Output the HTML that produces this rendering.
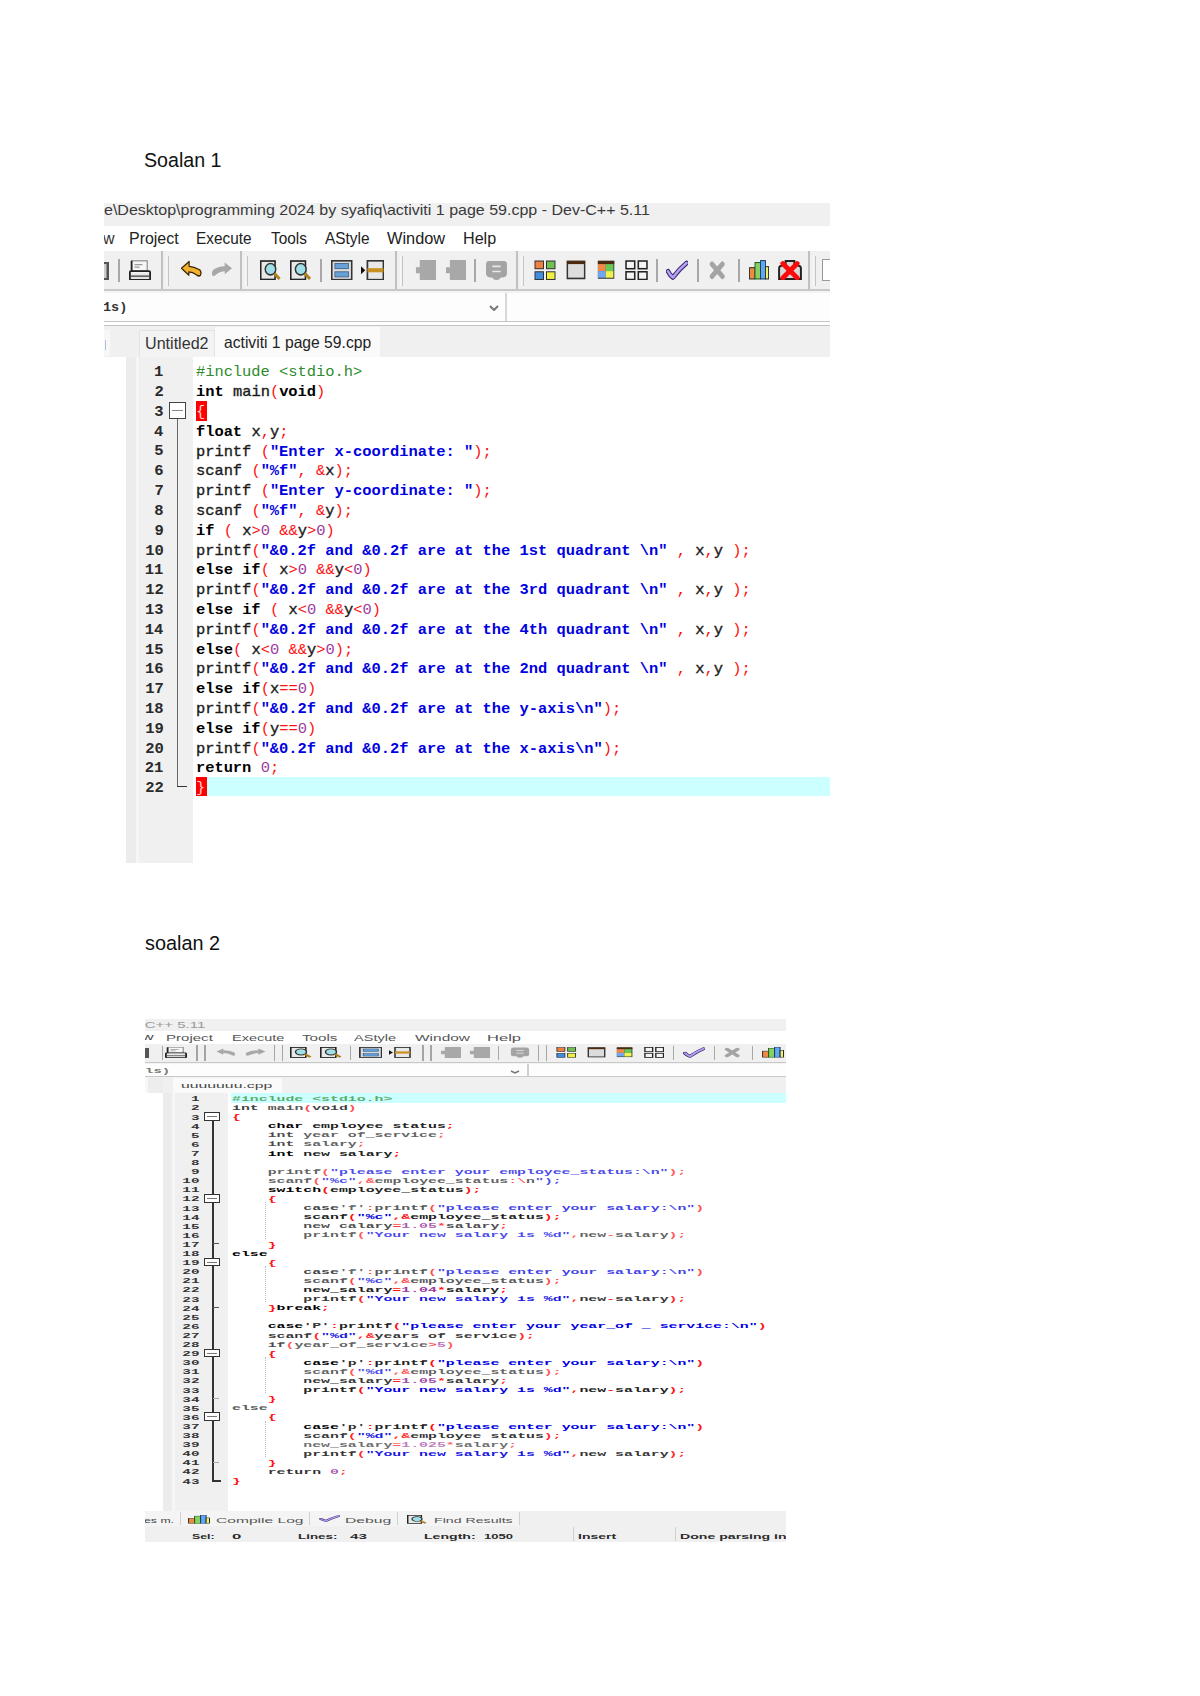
<!DOCTYPE html><html><head><meta charset="utf-8"><style>
html,body{margin:0;padding:0;background:#fff;width:1200px;height:1696px;overflow:hidden;position:relative}
.pp{color:#2e8b2e}
.k{color:#000;font-weight:bold}
.id{color:#1a1a1a}
.s{color:#0000e0;font-weight:bold}
.ch{color:#333}
.c2 .id{color:#222}
.c1 .id{-webkit-text-stroke:0.35px #1a1a1a}
.n{color:#9a3aa0}
.sy{color:#ff1010}
.br{color:#ffd0d0}
</style></head><body>
<div class="h" style="position:absolute;left:144.12px;top:150.17px;font-family:'Liberation Sans',sans-serif;font-size:20.5px;line-height:20.5px;height:20.5px;color:#111;font-weight:normal;white-space:pre;transform:scale(0.9566,1.0);transform-origin:0px 17.43px;">Soalan 1</div>
<div class="h" style="position:absolute;left:145.2px;top:933.38px;font-family:'Liberation Sans',sans-serif;font-size:20.5px;line-height:20.5px;height:20.5px;color:#111;font-weight:normal;white-space:pre;transform:scale(0.9677,1.0);transform-origin:0px 17.43px;">soalan 2</div>
<div style="position:absolute;left:104px;top:203px;width:726px;height:23px;background:#f0f0f0;"></div>
<div style="position:absolute;left:103.78px;top:202.92px;font-family:'Liberation Sans',sans-serif;font-size:14.8px;line-height:14.8px;height:14.8px;color:#3a3a3a;font-weight:normal;white-space:pre;transform:scale(1.0816,1.0);transform-origin:0px 12.58px;">e\Desktop\programming 2024 by syafiq\activiti 1 page 59.cpp - Dev-C++ 5.11</div>
<div style="position:absolute;left:104px;top:226px;width:726px;height:25px;background:#ffffff;"></div>
<div style="position:absolute;left:103px;top:230.70px;font-family:'Liberation Sans',sans-serif;font-size:16px;line-height:16px;height:16px;color:#333;font-weight:normal;white-space:pre;">w</div>
<div style="position:absolute;left:129.22px;top:230.38px;font-family:'Liberation Sans',sans-serif;font-size:16.5px;line-height:16.5px;height:16.5px;color:#222;font-weight:normal;white-space:pre;transform:scale(0.9667,1.0);transform-origin:0px 14.03px;">Project</div>
<div style="position:absolute;left:196.27px;top:230.38px;font-family:'Liberation Sans',sans-serif;font-size:16.5px;line-height:16.5px;height:16.5px;color:#222;font-weight:normal;white-space:pre;transform:scale(0.9304,1.0);transform-origin:0px 14.03px;">Execute</div>
<div style="position:absolute;left:270.69px;top:230.38px;font-family:'Liberation Sans',sans-serif;font-size:16.5px;line-height:16.5px;height:16.5px;color:#222;font-weight:normal;white-space:pre;transform:scale(0.9304,1.0);transform-origin:0px 14.03px;">Tools</div>
<div style="position:absolute;left:324.92px;top:230.38px;font-family:'Liberation Sans',sans-serif;font-size:16.5px;line-height:16.5px;height:16.5px;color:#222;font-weight:normal;white-space:pre;transform:scale(0.9336,1.0);transform-origin:0px 14.03px;">AStyle</div>
<div style="position:absolute;left:386.82px;top:230.38px;font-family:'Liberation Sans',sans-serif;font-size:16.5px;line-height:16.5px;height:16.5px;color:#222;font-weight:normal;white-space:pre;transform:scale(0.9905,1.0);transform-origin:0px 14.03px;">Window</div>
<div style="position:absolute;left:463.11px;top:230.38px;font-family:'Liberation Sans',sans-serif;font-size:16.5px;line-height:16.5px;height:16.5px;color:#222;font-weight:normal;white-space:pre;transform:scale(0.9772,1.0);transform-origin:0px 14.03px;">Help</div>
<div style="position:absolute;left:104px;top:251px;width:726px;height:38px;background:#f0f0f0;"></div>
<div style="position:absolute;left:104px;top:289px;width:726px;height:1.5px;background:#c8c8c8;"></div>
<div style="position:absolute;left:118px;top:258.5px;width:1.5px;height:23.5px;background:#a8a8a8;"></div>
<div style="position:absolute;left:320px;top:258.5px;width:1.5px;height:23.5px;background:#a8a8a8;"></div>
<div style="position:absolute;left:474px;top:258.5px;width:1.5px;height:23.5px;background:#a8a8a8;"></div>
<div style="position:absolute;left:656px;top:258.5px;width:1.5px;height:23.5px;background:#a8a8a8;"></div>
<div style="position:absolute;left:697px;top:258.5px;width:1.5px;height:23.5px;background:#a8a8a8;"></div>
<div style="position:absolute;left:738px;top:258.5px;width:1.5px;height:23.5px;background:#a8a8a8;"></div>
<div style="position:absolute;left:161px;top:251px;width:1.5px;height:38px;background:#c0c0c0;"></div>
<div style="position:absolute;left:167.5px;top:256px;width:1.1999999999999886px;height:30px;background:#c4c4c4;"></div>
<div style="position:absolute;left:166.3px;top:256px;width:1.1999999999999886px;height:30px;background:#f8f8f8;"></div>
<div style="position:absolute;left:240px;top:251px;width:1.5px;height:38px;background:#c0c0c0;"></div>
<div style="position:absolute;left:246.5px;top:256px;width:1.1999999999999886px;height:30px;background:#c4c4c4;"></div>
<div style="position:absolute;left:245.3px;top:256px;width:1.1999999999999886px;height:30px;background:#f8f8f8;"></div>
<div style="position:absolute;left:395px;top:251px;width:1.5px;height:38px;background:#c0c0c0;"></div>
<div style="position:absolute;left:401.5px;top:256px;width:1.1999999999999886px;height:30px;background:#c4c4c4;"></div>
<div style="position:absolute;left:400.3px;top:256px;width:1.1999999999999886px;height:30px;background:#f8f8f8;"></div>
<div style="position:absolute;left:516px;top:251px;width:1.5px;height:38px;background:#c0c0c0;"></div>
<div style="position:absolute;left:522.5px;top:256px;width:1.2000000000000455px;height:30px;background:#c4c4c4;"></div>
<div style="position:absolute;left:521.3px;top:256px;width:1.2000000000000455px;height:30px;background:#f8f8f8;"></div>
<div style="position:absolute;left:808px;top:251px;width:1.5px;height:38px;background:#c0c0c0;"></div>
<div style="position:absolute;left:814.5px;top:256px;width:1.2000000000000455px;height:30px;background:#c4c4c4;"></div>
<div style="position:absolute;left:813.3px;top:256px;width:1.2000000000000455px;height:30px;background:#f8f8f8;"></div>
<svg style="position:absolute;left:104px;top:262px" width="5" height="18" viewBox="0 0 5 18" preserveAspectRatio="none"><rect x="0" y="0" width="5" height="18" fill="#555"/><rect x="0" y="2" width="2.5" height="14" fill="#ccc"/></svg>
<svg style="position:absolute;left:129px;top:259.5px" width="22" height="20.5" viewBox="0 0 22 20" preserveAspectRatio="none"><rect x="2.6" y="0.8" width="15.6" height="10" fill="#f6f6f6" stroke="#888" stroke-width="1.1"/><path d="M2.6 0.8 V10.8" stroke="#222" stroke-width="1.8"/><path d="M5.5 4.5h8M5.5 7h5" stroke="#999" stroke-width="1.3"/><rect x="0.9" y="10.8" width="20.2" height="8.6" rx="1" fill="#e4e4e4" stroke="#222" stroke-width="1.8"/><path d="M2 15.8h18" stroke="#666" stroke-width="1.6"/><path d="M2 12.6h18" stroke="#fafafa" stroke-width="1.2"/></svg>
<svg style="position:absolute;left:180.5px;top:259.5px" width="21" height="20.5" viewBox="0 0 22 20" preserveAspectRatio="none"><path d="M0.5 8 L8.5 1.5 L8.5 6.2 Q13.5 6.5 19.5 9.5 Q22 12 20.2 15 Q18.5 16.3 16.5 14.6 Q12 11.6 8.2 11.6 L8.2 14.8 Z" fill="#f2b030" stroke="#3a2400" stroke-width="1.3" stroke-linejoin="round"/></svg>
<svg style="position:absolute;left:211px;top:259.5px" width="21.5" height="20.5" viewBox="0 0 22 20" preserveAspectRatio="none"><path d="M21.5 8 L14 2.5 L14 6 Q7 6 1.8 10 Q0 13 1.6 15.5 Q3.2 16.2 5 14.5 Q9 11 14 11 L14 14 Z" fill="#a8a8a8"/></svg>
<svg style="position:absolute;left:260px;top:259.5px" width="21" height="20.5" viewBox="0 0 22 20" preserveAspectRatio="none"><rect x="0.8" y="1" width="15" height="18" fill="#e8e8e8" stroke="#222" stroke-width="1.6"/><circle cx="11" cy="9" r="5.5" fill="#9fe0e8" stroke="#333" stroke-width="1.5"/><path d="M15 13 L20.5 18.5" stroke="#b08020" stroke-width="3"/></svg>
<svg style="position:absolute;left:289.5px;top:259.5px" width="21.5" height="20.5" viewBox="0 0 22 20" preserveAspectRatio="none"><rect x="0.8" y="1" width="15" height="18" fill="#e8e8e8" stroke="#222" stroke-width="1.6"/><circle cx="11" cy="9" r="5.5" fill="#9fe0e8" stroke="#333" stroke-width="1.5"/><path d="M15 13 L20.5 18.5" stroke="#b08020" stroke-width="3"/></svg>
<svg style="position:absolute;left:331px;top:259.5px" width="21.5" height="20.5" viewBox="0 0 22 20" preserveAspectRatio="none"><rect x="0.8" y="0.8" width="20.4" height="18.4" fill="#ddd" stroke="#333" stroke-width="1.6"/><rect x="4" y="3.5" width="14" height="5" fill="#6aa0d8" stroke="#3a5a80" stroke-width="0.8"/><rect x="4" y="11.5" width="14" height="5" fill="#6aa0d8" stroke="#3a5a80" stroke-width="0.8"/></svg>
<svg style="position:absolute;left:360.5px;top:259.5px" width="23.5" height="20.5" viewBox="0 0 22 20" preserveAspectRatio="none"><path d="M0 6 L4 10 L0 14 Z" fill="#111"/><rect x="6" y="0.8" width="15" height="18.4" fill="#e8e8e8" stroke="#333" stroke-width="1.6"/><rect x="6" y="8" width="15" height="4" fill="#c89020"/></svg>
<svg style="position:absolute;left:415px;top:259.5px" width="21" height="20.5" viewBox="0 0 22 20" preserveAspectRatio="none"><path d="M5 0 H22 V20 H5 V13 H1 V7 H5 Z" fill="#a8a8a8"/></svg>
<svg style="position:absolute;left:444.5px;top:259.5px" width="21.5" height="20.5" viewBox="0 0 22 20" preserveAspectRatio="none"><path d="M5 0 H22 V20 H5 V13 H1 V7 H5 Z" fill="#a8a8a8"/></svg>
<svg style="position:absolute;left:485px;top:259.5px" width="23" height="20.5" viewBox="0 0 22 20" preserveAspectRatio="none"><path d="M1 4 Q1 1 4 1 H18 Q21 1 21 4 V13 Q21 17 17 17 H15 Q14 19.5 11 19.5 Q8 19.5 7 17 H5 Q1 17 1 13 Z" fill="#a4a4a4"/><path d="M7 6.2h8M7 11.2h8" stroke="#e8e8e8" stroke-width="1.6"/></svg>
<svg style="position:absolute;left:534px;top:259.5px" width="22" height="20.5" viewBox="0 0 22 20" preserveAspectRatio="none"><rect x="1" y="1" width="8.5" height="7.5" fill="#f08040" stroke="#333" stroke-width="1"/><rect x="12.5" y="1" width="8.5" height="7.5" fill="#70c050" stroke="#333" stroke-width="1"/><rect x="1" y="11.5" width="8.5" height="7.5" fill="#4090e0" stroke="#333" stroke-width="1"/><rect x="12.5" y="11.5" width="8.5" height="7.5" fill="#f0f040" stroke="#333" stroke-width="1"/></svg>
<svg style="position:absolute;left:566px;top:259.5px" width="20" height="20.5" viewBox="0 0 22 20" preserveAspectRatio="none"><rect x="1.5" y="1.5" width="19" height="16.5" fill="#dcdcdc" stroke="#333" stroke-width="1.6"/><rect x="1" y="0.8" width="20" height="3.2" fill="#4a2a10"/></svg>
<svg style="position:absolute;left:596.5px;top:259.5px" width="19" height="20.5" viewBox="0 0 22 20" preserveAspectRatio="none"><rect x="1" y="0.8" width="19" height="17.5" fill="#333"/><rect x="1" y="0.8" width="19" height="3" fill="#4a2a10"/><rect x="1.2" y="4" width="9" height="6.8" fill="#f08a48"/><rect x="10.2" y="4" width="8.8" height="6.8" fill="#68c858"/><rect x="1.2" y="10.8" width="9" height="6.5" fill="#70a8f0"/><rect x="10.2" y="10.8" width="8.8" height="6.5" fill="#f0f050"/></svg>
<svg style="position:absolute;left:625px;top:259.5px" width="22.5" height="20.5" viewBox="0 0 22 20" preserveAspectRatio="none"><rect x="1" y="1" width="8.5" height="7.5" fill="#f4f4f4" stroke="#222" stroke-width="1.5"/><rect x="13" y="1" width="8.5" height="7.5" fill="#f4f4f4" stroke="#222" stroke-width="1.5"/><rect x="1" y="11.5" width="8.5" height="7.5" fill="#f4f4f4" stroke="#222" stroke-width="1.5"/><rect x="13" y="11.5" width="8.5" height="7.5" fill="#f4f4f4" stroke="#222" stroke-width="1.5"/></svg>
<svg style="position:absolute;left:666px;top:259.5px" width="22" height="20.5" viewBox="0 0 22 20" preserveAspectRatio="none"><path d="M2 11 Q4 15 7 17 Q13 9 20.5 3" fill="none" stroke="#3a2a70" stroke-width="4.6" stroke-linecap="round" stroke-linejoin="round"/><path d="M2 11 Q4 15 7 17 Q13 9 20.5 3" fill="none" stroke="#b8a0f4" stroke-width="2.6" stroke-linecap="round" stroke-linejoin="round"/></svg>
<svg style="position:absolute;left:709px;top:259.5px" width="19" height="20.5" viewBox="0 0 22 20" preserveAspectRatio="none"><path d="M3.5 4 L15.5 16 M15.5 4 L3.5 16" stroke="#a4a4a4" stroke-width="5.2" stroke-linecap="round"/></svg>
<svg style="position:absolute;left:749px;top:259.5px" width="20" height="20.5" viewBox="0 0 22 20" preserveAspectRatio="none"><rect x="0.6" y="7.5" width="6" height="11" fill="#f08a40" stroke="#2a2a2a" stroke-width="1"/><rect x="6.6" y="2.5" width="6" height="16" fill="#8ad060" stroke="#1a5a1a" stroke-width="1"/><rect x="12.6" y="0.6" width="5.5" height="17.9" fill="#60a8f0" stroke="#1a3a6a" stroke-width="1"/><rect x="18.1" y="6.5" width="3.4" height="12" fill="#f0f070" stroke="#2a2a2a" stroke-width="1"/></svg>
<svg style="position:absolute;left:778px;top:259.5px" width="24" height="20.5" viewBox="0 0 22 20" preserveAspectRatio="none"><path d="M1 18.5 V8 Q1 5.5 4 5.5 H7 V1 H15 V5.5 H18 Q21 5.5 21 8 V18.5 Z" fill="#d8d8d8" stroke="#222" stroke-width="1.8"/><path d="M4.5 3.5 L17.5 17.5 M17.5 3.5 L4.5 17.5" stroke="#ff0a0a" stroke-width="4.6" stroke-linecap="round"/></svg>
<svg style="position:absolute;left:822px;top:259px" width="8" height="22" viewBox="0 0 8 22" preserveAspectRatio="none"><rect x="0.5" y="0.5" width="12" height="21" fill="#fff" stroke="#999"/></svg>
<div style="position:absolute;left:104px;top:290.5px;width:726px;height:30.5px;background:#f3f3f3;"></div>
<div style="position:absolute;left:104px;top:293px;width:401px;height:27.5px;background:#fdfdfd;"></div>
<div style="position:absolute;left:507px;top:293px;width:323px;height:27.5px;background:#fdfdfd;"></div>
<div style="position:absolute;left:505px;top:293px;width:1.5px;height:27.5px;background:#d8d8d8;"></div>
<div style="position:absolute;left:104px;top:320.5px;width:726px;height:1.5px;background:#c4c4c4;"></div>
<div style="position:absolute;left:104px;top:324.5px;width:726px;height:1.5px;background:#c4c4c4;"></div>
<div style="position:absolute;left:103px;top:301.24px;font-family:'Liberation Mono',monospace;font-size:13.5px;line-height:13.5px;height:13.5px;color:#333;font-weight:bold;white-space:pre;">1s)</div>
<svg style="position:absolute;left:489px;top:304.5px" width="10" height="6" viewBox="0 0 10 6" preserveAspectRatio="none"><path d="M1 1 L5 5 L9 1" fill="none" stroke="#777" stroke-width="2"/></svg>
<div style="position:absolute;left:104px;top:326px;width:726px;height:31px;background:#f0f0f0;"></div>
<div style="position:absolute;left:104px;top:330px;width:6px;height:26px;background:#f7f7f7;"></div>
<div style="position:absolute;left:104.5px;top:340px;width:1.0px;height:10px;background:#a8c0e8;"></div>
<div style="position:absolute;left:138.5px;top:330px;width:76.0px;height:27px;background:#f3f3f3;box-sizing:border-box;border:1px solid #e4e4e4;border-bottom:none"></div>
<div style="position:absolute;left:215px;top:327px;width:165px;height:30px;background:#fafafa;"></div>
<div style="position:absolute;left:145.29px;top:334.78px;font-family:'Liberation Sans',sans-serif;font-size:16.5px;line-height:16.5px;height:16.5px;color:#333;font-weight:normal;white-space:pre;transform:scale(0.9757,1.0);transform-origin:0px 14.03px;">Untitled2</div>
<div style="position:absolute;left:223.9px;top:333.78px;font-family:'Liberation Sans',sans-serif;font-size:16.5px;line-height:16.5px;height:16.5px;color:#222;font-weight:normal;white-space:pre;transform:scale(0.9491,1.0);transform-origin:0px 14.03px;">activiti 1 page 59.cpp</div>
<div style="position:absolute;left:104px;top:357px;width:726px;height:506px;background:#ffffff;"></div>
<div style="position:absolute;left:126px;top:357px;width:10px;height:506px;background:#ececec;"></div>
<div style="position:absolute;left:136px;top:357px;width:3px;height:506px;background:#f6f6f6;"></div>
<div style="position:absolute;left:139px;top:357px;width:54px;height:506px;background:#f0f0f0;"></div>
<div style="position:absolute;left:196px;top:776.8px;width:634px;height:19.200000000000045px;background:#ccffff;"></div>
<div style="position:absolute;left:195.5px;top:401px;width:11.5px;height:19.5px;background:#ff0000;"></div>
<div style="position:absolute;left:195.5px;top:777px;width:11.5px;height:19px;background:#ff0000;"></div>
<div style="position:absolute;left:177px;top:418.5px;width:1.3000000000000114px;height:368.0px;background:#666;"></div>
<div style="position:absolute;left:177px;top:785.5px;width:9.5px;height:1.5px;background:#333;"></div>
<div style="position:absolute;left:169px;top:402px;width:16.5px;height:16.5px;box-sizing:border-box;border:1.5px solid #444;background:#fff"></div>
<div style="position:absolute;left:172px;top:409.5px;width:11px;height:1.5px;background:#888;"></div>
<div style="position:absolute;left:154.12px;top:365.22px;font-family:'Liberation Mono',monospace;font-size:15.5px;line-height:15.5px;height:15.5px;color:#2a2a2a;font-weight:bold;white-space:pre;">1</div>
<div style="position:absolute;left:154.43px;top:385.03px;font-family:'Liberation Mono',monospace;font-size:15.5px;line-height:15.5px;height:15.5px;color:#2a2a2a;font-weight:bold;white-space:pre;">2</div>
<div style="position:absolute;left:154.28px;top:404.84px;font-family:'Liberation Mono',monospace;font-size:15.5px;line-height:15.5px;height:15.5px;color:#2a2a2a;font-weight:bold;white-space:pre;">3</div>
<div style="position:absolute;left:153.96px;top:424.65px;font-family:'Liberation Mono',monospace;font-size:15.5px;line-height:15.5px;height:15.5px;color:#2a2a2a;font-weight:bold;white-space:pre;">4</div>
<div style="position:absolute;left:154.28px;top:444.46px;font-family:'Liberation Mono',monospace;font-size:15.5px;line-height:15.5px;height:15.5px;color:#2a2a2a;font-weight:bold;white-space:pre;">5</div>
<div style="position:absolute;left:154.35px;top:464.27px;font-family:'Liberation Mono',monospace;font-size:15.5px;line-height:15.5px;height:15.5px;color:#2a2a2a;font-weight:bold;white-space:pre;">6</div>
<div style="position:absolute;left:154.51px;top:484.08px;font-family:'Liberation Mono',monospace;font-size:15.5px;line-height:15.5px;height:15.5px;color:#2a2a2a;font-weight:bold;white-space:pre;">7</div>
<div style="position:absolute;left:154.35px;top:503.89px;font-family:'Liberation Mono',monospace;font-size:15.5px;line-height:15.5px;height:15.5px;color:#2a2a2a;font-weight:bold;white-space:pre;">8</div>
<div style="position:absolute;left:154.43px;top:523.70px;font-family:'Liberation Mono',monospace;font-size:15.5px;line-height:15.5px;height:15.5px;color:#2a2a2a;font-weight:bold;white-space:pre;">9</div>
<div style="position:absolute;left:145.13px;top:543.51px;font-family:'Liberation Mono',monospace;font-size:15.5px;line-height:15.5px;height:15.5px;color:#2a2a2a;font-weight:bold;white-space:pre;">10</div>
<div style="position:absolute;left:144.82px;top:563.32px;font-family:'Liberation Mono',monospace;font-size:15.5px;line-height:15.5px;height:15.5px;color:#2a2a2a;font-weight:bold;white-space:pre;">11</div>
<div style="position:absolute;left:145.13px;top:583.13px;font-family:'Liberation Mono',monospace;font-size:15.5px;line-height:15.5px;height:15.5px;color:#2a2a2a;font-weight:bold;white-space:pre;">12</div>
<div style="position:absolute;left:144.98px;top:602.94px;font-family:'Liberation Mono',monospace;font-size:15.5px;line-height:15.5px;height:15.5px;color:#2a2a2a;font-weight:bold;white-space:pre;">13</div>
<div style="position:absolute;left:144.67px;top:622.75px;font-family:'Liberation Mono',monospace;font-size:15.5px;line-height:15.5px;height:15.5px;color:#2a2a2a;font-weight:bold;white-space:pre;">14</div>
<div style="position:absolute;left:144.98px;top:642.56px;font-family:'Liberation Mono',monospace;font-size:15.5px;line-height:15.5px;height:15.5px;color:#2a2a2a;font-weight:bold;white-space:pre;">15</div>
<div style="position:absolute;left:145.05px;top:662.37px;font-family:'Liberation Mono',monospace;font-size:15.5px;line-height:15.5px;height:15.5px;color:#2a2a2a;font-weight:bold;white-space:pre;">16</div>
<div style="position:absolute;left:145.21px;top:682.18px;font-family:'Liberation Mono',monospace;font-size:15.5px;line-height:15.5px;height:15.5px;color:#2a2a2a;font-weight:bold;white-space:pre;">17</div>
<div style="position:absolute;left:145.05px;top:701.99px;font-family:'Liberation Mono',monospace;font-size:15.5px;line-height:15.5px;height:15.5px;color:#2a2a2a;font-weight:bold;white-space:pre;">18</div>
<div style="position:absolute;left:145.13px;top:721.80px;font-family:'Liberation Mono',monospace;font-size:15.5px;line-height:15.5px;height:15.5px;color:#2a2a2a;font-weight:bold;white-space:pre;">19</div>
<div style="position:absolute;left:145.13px;top:741.61px;font-family:'Liberation Mono',monospace;font-size:15.5px;line-height:15.5px;height:15.5px;color:#2a2a2a;font-weight:bold;white-space:pre;">20</div>
<div style="position:absolute;left:144.82px;top:761.42px;font-family:'Liberation Mono',monospace;font-size:15.5px;line-height:15.5px;height:15.5px;color:#2a2a2a;font-weight:bold;white-space:pre;">21</div>
<div style="position:absolute;left:145.13px;top:781.23px;font-family:'Liberation Mono',monospace;font-size:15.5px;line-height:15.5px;height:15.5px;color:#2a2a2a;font-weight:bold;white-space:pre;">22</div>
<div class="c1" style="position:absolute;left:195.9px;top:365.28px;font-family:'Liberation Mono',monospace;font-size:15.42px;line-height:15.42px;height:15.42px;color:#000;font-weight:normal;white-space:pre;"><span class="pp">#include &lt;stdio.h&gt;</span></div>
<div class="c1" style="position:absolute;left:195.9px;top:385.09px;font-family:'Liberation Mono',monospace;font-size:15.42px;line-height:15.42px;height:15.42px;color:#000;font-weight:normal;white-space:pre;"><span class="k">int</span> <span class="id">main</span><span class="sy">(</span><span class="k">void</span><span class="sy">)</span></div>
<div class="c1" style="position:absolute;left:195.9px;top:404.90px;font-family:'Liberation Mono',monospace;font-size:15.42px;line-height:15.42px;height:15.42px;color:#000;font-weight:normal;white-space:pre;"><span class="br">{</span></div>
<div class="c1" style="position:absolute;left:195.9px;top:424.71px;font-family:'Liberation Mono',monospace;font-size:15.42px;line-height:15.42px;height:15.42px;color:#000;font-weight:normal;white-space:pre;"><span class="k">float</span> <span class="id">x</span><span class="sy">,</span><span class="id">y</span><span class="sy">;</span></div>
<div class="c1" style="position:absolute;left:195.9px;top:444.52px;font-family:'Liberation Mono',monospace;font-size:15.42px;line-height:15.42px;height:15.42px;color:#000;font-weight:normal;white-space:pre;"><span class="id">printf</span> <span class="sy">(</span><span class="s">&quot;Enter x-coordinate: &quot;</span><span class="sy">)</span><span class="sy">;</span></div>
<div class="c1" style="position:absolute;left:195.9px;top:464.33px;font-family:'Liberation Mono',monospace;font-size:15.42px;line-height:15.42px;height:15.42px;color:#000;font-weight:normal;white-space:pre;"><span class="id">scanf</span> <span class="sy">(</span><span class="s">&quot;%f&quot;</span><span class="sy">,</span> <span class="sy">&amp;</span><span class="id">x</span><span class="sy">)</span><span class="sy">;</span></div>
<div class="c1" style="position:absolute;left:195.9px;top:484.14px;font-family:'Liberation Mono',monospace;font-size:15.42px;line-height:15.42px;height:15.42px;color:#000;font-weight:normal;white-space:pre;"><span class="id">printf</span> <span class="sy">(</span><span class="s">&quot;Enter y-coordinate: &quot;</span><span class="sy">)</span><span class="sy">;</span></div>
<div class="c1" style="position:absolute;left:195.9px;top:503.95px;font-family:'Liberation Mono',monospace;font-size:15.42px;line-height:15.42px;height:15.42px;color:#000;font-weight:normal;white-space:pre;"><span class="id">scanf</span> <span class="sy">(</span><span class="s">&quot;%f&quot;</span><span class="sy">,</span> <span class="sy">&amp;</span><span class="id">y</span><span class="sy">)</span><span class="sy">;</span></div>
<div class="c1" style="position:absolute;left:195.9px;top:523.76px;font-family:'Liberation Mono',monospace;font-size:15.42px;line-height:15.42px;height:15.42px;color:#000;font-weight:normal;white-space:pre;"><span class="k">if</span> <span class="sy">(</span> <span class="id">x</span><span class="sy">&gt;</span><span class="n">0</span> <span class="sy">&amp;</span><span class="sy">&amp;</span><span class="id">y</span><span class="sy">&gt;</span><span class="n">0</span><span class="sy">)</span></div>
<div class="c1" style="position:absolute;left:195.9px;top:543.57px;font-family:'Liberation Mono',monospace;font-size:15.42px;line-height:15.42px;height:15.42px;color:#000;font-weight:normal;white-space:pre;"><span class="id">printf</span><span class="sy">(</span><span class="s">&quot;&amp;0.2f and &amp;0.2f are at the 1st quadrant \n&quot;</span> <span class="sy">,</span> <span class="id">x</span><span class="sy">,</span><span class="id">y</span> <span class="sy">)</span><span class="sy">;</span></div>
<div class="c1" style="position:absolute;left:195.9px;top:563.38px;font-family:'Liberation Mono',monospace;font-size:15.42px;line-height:15.42px;height:15.42px;color:#000;font-weight:normal;white-space:pre;"><span class="k">else</span> <span class="k">if</span><span class="sy">(</span> <span class="id">x</span><span class="sy">&gt;</span><span class="n">0</span> <span class="sy">&amp;</span><span class="sy">&amp;</span><span class="id">y</span><span class="sy">&lt;</span><span class="n">0</span><span class="sy">)</span></div>
<div class="c1" style="position:absolute;left:195.9px;top:583.19px;font-family:'Liberation Mono',monospace;font-size:15.42px;line-height:15.42px;height:15.42px;color:#000;font-weight:normal;white-space:pre;"><span class="id">printf</span><span class="sy">(</span><span class="s">&quot;&amp;0.2f and &amp;0.2f are at the 3rd quadrant \n&quot;</span> <span class="sy">,</span> <span class="id">x</span><span class="sy">,</span><span class="id">y</span> <span class="sy">)</span><span class="sy">;</span></div>
<div class="c1" style="position:absolute;left:195.9px;top:603.00px;font-family:'Liberation Mono',monospace;font-size:15.42px;line-height:15.42px;height:15.42px;color:#000;font-weight:normal;white-space:pre;"><span class="k">else</span> <span class="k">if</span> <span class="sy">(</span> <span class="id">x</span><span class="sy">&lt;</span><span class="n">0</span> <span class="sy">&amp;</span><span class="sy">&amp;</span><span class="id">y</span><span class="sy">&lt;</span><span class="n">0</span><span class="sy">)</span></div>
<div class="c1" style="position:absolute;left:195.9px;top:622.81px;font-family:'Liberation Mono',monospace;font-size:15.42px;line-height:15.42px;height:15.42px;color:#000;font-weight:normal;white-space:pre;"><span class="id">printf</span><span class="sy">(</span><span class="s">&quot;&amp;0.2f and &amp;0.2f are at the 4th quadrant \n&quot;</span> <span class="sy">,</span> <span class="id">x</span><span class="sy">,</span><span class="id">y</span> <span class="sy">)</span><span class="sy">;</span></div>
<div class="c1" style="position:absolute;left:195.9px;top:642.62px;font-family:'Liberation Mono',monospace;font-size:15.42px;line-height:15.42px;height:15.42px;color:#000;font-weight:normal;white-space:pre;"><span class="k">else</span><span class="sy">(</span> <span class="id">x</span><span class="sy">&lt;</span><span class="n">0</span> <span class="sy">&amp;</span><span class="sy">&amp;</span><span class="id">y</span><span class="sy">&gt;</span><span class="n">0</span><span class="sy">)</span><span class="sy">;</span></div>
<div class="c1" style="position:absolute;left:195.9px;top:662.43px;font-family:'Liberation Mono',monospace;font-size:15.42px;line-height:15.42px;height:15.42px;color:#000;font-weight:normal;white-space:pre;"><span class="id">printf</span><span class="sy">(</span><span class="s">&quot;&amp;0.2f and &amp;0.2f are at the 2nd quadrant \n&quot;</span> <span class="sy">,</span> <span class="id">x</span><span class="sy">,</span><span class="id">y</span> <span class="sy">)</span><span class="sy">;</span></div>
<div class="c1" style="position:absolute;left:195.9px;top:682.24px;font-family:'Liberation Mono',monospace;font-size:15.42px;line-height:15.42px;height:15.42px;color:#000;font-weight:normal;white-space:pre;"><span class="k">else</span> <span class="k">if</span><span class="sy">(</span><span class="id">x</span><span class="sy">=</span><span class="sy">=</span><span class="n">0</span><span class="sy">)</span></div>
<div class="c1" style="position:absolute;left:195.9px;top:702.05px;font-family:'Liberation Mono',monospace;font-size:15.42px;line-height:15.42px;height:15.42px;color:#000;font-weight:normal;white-space:pre;"><span class="id">printf</span><span class="sy">(</span><span class="s">&quot;&amp;0.2f and &amp;0.2f are at the y-axis\n&quot;</span><span class="sy">)</span><span class="sy">;</span></div>
<div class="c1" style="position:absolute;left:195.9px;top:721.86px;font-family:'Liberation Mono',monospace;font-size:15.42px;line-height:15.42px;height:15.42px;color:#000;font-weight:normal;white-space:pre;"><span class="k">else</span> <span class="k">if</span><span class="sy">(</span><span class="id">y</span><span class="sy">=</span><span class="sy">=</span><span class="n">0</span><span class="sy">)</span></div>
<div class="c1" style="position:absolute;left:195.9px;top:741.67px;font-family:'Liberation Mono',monospace;font-size:15.42px;line-height:15.42px;height:15.42px;color:#000;font-weight:normal;white-space:pre;"><span class="id">printf</span><span class="sy">(</span><span class="s">&quot;&amp;0.2f and &amp;0.2f are at the x-axis\n&quot;</span><span class="sy">)</span><span class="sy">;</span></div>
<div class="c1" style="position:absolute;left:195.9px;top:761.48px;font-family:'Liberation Mono',monospace;font-size:15.42px;line-height:15.42px;height:15.42px;color:#000;font-weight:normal;white-space:pre;"><span class="k">return</span> <span class="n">0</span><span class="sy">;</span></div>
<div class="c1" style="position:absolute;left:195.9px;top:781.29px;font-family:'Liberation Mono',monospace;font-size:15.42px;line-height:15.42px;height:15.42px;color:#000;font-weight:normal;white-space:pre;"><span class="br">}</span></div>
<div style="position:absolute;left:145px;top:1018.5px;width:641px;height:12.5px;background:#f0f0f0;"></div>
<div style="position:absolute;left:144.75px;top:1015.25px;font-family:'Liberation Sans',sans-serif;font-size:15px;line-height:15px;height:15px;color:#999;font-weight:normal;white-space:pre;transform:scale(1.0,0.56);transform-origin:0px 12.75px;">C++ 5.11</div>
<div style="position:absolute;left:145px;top:1031px;width:641px;height:12.5px;background:#ffffff;"></div>
<div style="position:absolute;left:142px;top:1026.90px;font-family:'Liberation Sans',sans-serif;font-size:16px;line-height:16px;height:16px;color:#444;font-weight:normal;white-space:pre;transform:scale(1.0,0.56);transform-origin:0px 13.60px;">w</div>
<div style="position:absolute;left:166.3px;top:1026.57px;font-family:'Liberation Sans',sans-serif;font-size:16.5px;line-height:16.5px;height:16.5px;color:#555;font-weight:normal;white-space:pre;transform:scale(0.9116,0.56);transform-origin:0px 14.03px;">Project</div>
<div style="position:absolute;left:232.34px;top:1026.57px;font-family:'Liberation Sans',sans-serif;font-size:16.5px;line-height:16.5px;height:16.5px;color:#555;font-weight:normal;white-space:pre;transform:scale(0.8782,0.56);transform-origin:0px 14.03px;">Execute</div>
<div style="position:absolute;left:301.7px;top:1026.57px;font-family:'Liberation Sans',sans-serif;font-size:16.5px;line-height:16.5px;height:16.5px;color:#555;font-weight:normal;white-space:pre;transform:scale(0.9197,0.56);transform-origin:0px 14.03px;">Tools</div>
<div style="position:absolute;left:354.43px;top:1026.57px;font-family:'Liberation Sans',sans-serif;font-size:16.5px;line-height:16.5px;height:16.5px;color:#555;font-weight:normal;white-space:pre;transform:scale(0.8813,0.56);transform-origin:0px 14.03px;">AStyle</div>
<div style="position:absolute;left:414.92px;top:1026.57px;font-family:'Liberation Sans',sans-serif;font-size:16.5px;line-height:16.5px;height:16.5px;color:#555;font-weight:normal;white-space:pre;transform:scale(0.9376,0.56);transform-origin:0px 14.03px;">Window</div>
<div style="position:absolute;left:486.68px;top:1026.57px;font-family:'Liberation Sans',sans-serif;font-size:16.5px;line-height:16.5px;height:16.5px;color:#555;font-weight:normal;white-space:pre;transform:scale(1.0023,0.56);transform-origin:0px 14.03px;">Help</div>
<div style="position:absolute;left:145px;top:1043.5px;width:641px;height:18.5px;background:#f0f0f0;"></div>
<div style="position:absolute;left:145px;top:1062px;width:641px;height:1px;background:#c8c8c8;"></div>
<div style="position:absolute;left:162px;top:1046px;width:1.1999999999999886px;height:14px;background:#a8a8a8;"></div>
<div style="position:absolute;left:350px;top:1046px;width:1.1999999999999886px;height:14px;background:#a8a8a8;"></div>
<div style="position:absolute;left:498px;top:1046px;width:1.1999999999999886px;height:14px;background:#a8a8a8;"></div>
<div style="position:absolute;left:673px;top:1046px;width:1.2000000000000455px;height:14px;background:#a8a8a8;"></div>
<div style="position:absolute;left:714px;top:1046px;width:1.2000000000000455px;height:14px;background:#a8a8a8;"></div>
<div style="position:absolute;left:751.5px;top:1046px;width:1.2000000000000455px;height:14px;background:#a8a8a8;"></div>
<div style="position:absolute;left:196.0px;top:1045px;width:1.5px;height:16px;background:#a4a4a4;"></div>
<div style="position:absolute;left:204.0px;top:1045px;width:1.5px;height:16px;background:#a4a4a4;"></div>
<div style="position:absolute;left:273.5px;top:1045px;width:1.5px;height:16px;background:#a4a4a4;"></div>
<div style="position:absolute;left:281.5px;top:1045px;width:1.5px;height:16px;background:#a4a4a4;"></div>
<div style="position:absolute;left:422.0px;top:1045px;width:1.5px;height:16px;background:#a4a4a4;"></div>
<div style="position:absolute;left:430.0px;top:1045px;width:1.5px;height:16px;background:#a4a4a4;"></div>
<div style="position:absolute;left:537.5px;top:1045px;width:1.5px;height:16px;background:#a4a4a4;"></div>
<div style="position:absolute;left:545.5px;top:1045px;width:1.5px;height:16px;background:#a4a4a4;"></div>
<svg style="position:absolute;left:164.5px;top:1046.5px" width="22" height="11" viewBox="0 0 22 20" preserveAspectRatio="none"><rect x="2.6" y="0.8" width="15.6" height="10" fill="#f6f6f6" stroke="#888" stroke-width="1.1"/><path d="M2.6 0.8 V10.8" stroke="#222" stroke-width="1.8"/><path d="M5.5 4.5h8M5.5 7h5" stroke="#999" stroke-width="1.3"/><rect x="0.9" y="10.8" width="20.2" height="8.6" rx="1" fill="#e4e4e4" stroke="#222" stroke-width="1.8"/><path d="M2 15.8h18" stroke="#666" stroke-width="1.6"/><path d="M2 12.6h18" stroke="#fafafa" stroke-width="1.2"/></svg>
<svg style="position:absolute;left:215.5px;top:1046.5px" width="20" height="11" viewBox="0 0 22 20" preserveAspectRatio="none"><g transform="translate(22,0) scale(-1,1)"><path d="M21.5 8 L14 2.5 L14 6 Q7 6 1.8 10 Q0 13 1.6 15.5 Q3.2 16.2 5 14.5 Q9 11 14 11 L14 14 Z" fill="#a8a8a8"/></g></svg>
<svg style="position:absolute;left:244.5px;top:1046.5px" width="21" height="11" viewBox="0 0 22 20" preserveAspectRatio="none"><path d="M21.5 8 L14 2.5 L14 6 Q7 6 1.8 10 Q0 13 1.6 15.5 Q3.2 16.2 5 14.5 Q9 11 14 11 L14 14 Z" fill="#a8a8a8"/></svg>
<svg style="position:absolute;left:290px;top:1046.5px" width="22" height="11" viewBox="0 0 22 20" preserveAspectRatio="none"><rect x="0.8" y="1" width="15" height="18" fill="#e8e8e8" stroke="#222" stroke-width="1.6"/><circle cx="11" cy="9" r="5.5" fill="#9fe0e8" stroke="#333" stroke-width="1.5"/><path d="M15 13 L20.5 18.5" stroke="#b08020" stroke-width="3"/></svg>
<svg style="position:absolute;left:320px;top:1046.5px" width="22" height="11" viewBox="0 0 22 20" preserveAspectRatio="none"><rect x="0.8" y="1" width="15" height="18" fill="#e8e8e8" stroke="#222" stroke-width="1.6"/><circle cx="11" cy="9" r="5.5" fill="#9fe0e8" stroke="#333" stroke-width="1.5"/><path d="M15 13 L20.5 18.5" stroke="#b08020" stroke-width="3"/></svg>
<svg style="position:absolute;left:358.5px;top:1046.5px" width="23.5" height="11" viewBox="0 0 22 20" preserveAspectRatio="none"><rect x="0.8" y="0.8" width="20.4" height="18.4" fill="#ddd" stroke="#333" stroke-width="1.6"/><rect x="4" y="3.5" width="14" height="5" fill="#6aa0d8" stroke="#3a5a80" stroke-width="0.8"/><rect x="4" y="11.5" width="14" height="5" fill="#6aa0d8" stroke="#3a5a80" stroke-width="0.8"/></svg>
<svg style="position:absolute;left:389px;top:1046.5px" width="22" height="11" viewBox="0 0 22 20" preserveAspectRatio="none"><path d="M0 6 L4 10 L0 14 Z" fill="#111"/><rect x="6" y="0.8" width="15" height="18.4" fill="#e8e8e8" stroke="#333" stroke-width="1.6"/><rect x="6" y="8" width="15" height="4" fill="#c89020"/></svg>
<svg style="position:absolute;left:440px;top:1046.5px" width="21" height="11" viewBox="0 0 22 20" preserveAspectRatio="none"><path d="M5 0 H22 V20 H5 V13 H1 V7 H5 Z" fill="#a8a8a8"/></svg>
<svg style="position:absolute;left:469px;top:1046.5px" width="21" height="11" viewBox="0 0 22 20" preserveAspectRatio="none"><path d="M5 0 H22 V20 H5 V13 H1 V7 H5 Z" fill="#a8a8a8"/></svg>
<svg style="position:absolute;left:510px;top:1046.5px" width="20" height="11" viewBox="0 0 22 20" preserveAspectRatio="none"><path d="M1 4 Q1 1 4 1 H18 Q21 1 21 4 V13 Q21 17 17 17 H15 Q14 19.5 11 19.5 Q8 19.5 7 17 H5 Q1 17 1 13 Z" fill="#a4a4a4"/><path d="M7 6.2h8M7 11.2h8" stroke="#e8e8e8" stroke-width="1.6"/></svg>
<svg style="position:absolute;left:556.4px;top:1046.5px" width="20.5" height="11" viewBox="0 0 22 20" preserveAspectRatio="none"><rect x="1" y="1" width="8.5" height="7.5" fill="#f08040" stroke="#333" stroke-width="1"/><rect x="12.5" y="1" width="8.5" height="7.5" fill="#70c050" stroke="#333" stroke-width="1"/><rect x="1" y="11.5" width="8.5" height="7.5" fill="#4090e0" stroke="#333" stroke-width="1"/><rect x="12.5" y="11.5" width="8.5" height="7.5" fill="#f0f040" stroke="#333" stroke-width="1"/></svg>
<svg style="position:absolute;left:587px;top:1046.5px" width="19" height="11" viewBox="0 0 22 20" preserveAspectRatio="none"><rect x="1.5" y="1.5" width="19" height="16.5" fill="#dcdcdc" stroke="#333" stroke-width="1.6"/><rect x="1" y="0.8" width="20" height="3.2" fill="#4a2a10"/></svg>
<svg style="position:absolute;left:616px;top:1046.5px" width="18" height="11" viewBox="0 0 22 20" preserveAspectRatio="none"><rect x="1" y="0.8" width="19" height="17.5" fill="#333"/><rect x="1" y="0.8" width="19" height="3" fill="#4a2a10"/><rect x="1.2" y="4" width="9" height="6.8" fill="#f08a48"/><rect x="10.2" y="4" width="8.8" height="6.8" fill="#68c858"/><rect x="1.2" y="10.8" width="9" height="6.5" fill="#70a8f0"/><rect x="10.2" y="10.8" width="8.8" height="6.5" fill="#f0f050"/></svg>
<svg style="position:absolute;left:644px;top:1046.5px" width="20" height="11" viewBox="0 0 22 20" preserveAspectRatio="none"><rect x="1" y="1" width="8.5" height="7.5" fill="#f4f4f4" stroke="#222" stroke-width="1.5"/><rect x="13" y="1" width="8.5" height="7.5" fill="#f4f4f4" stroke="#222" stroke-width="1.5"/><rect x="1" y="11.5" width="8.5" height="7.5" fill="#f4f4f4" stroke="#222" stroke-width="1.5"/><rect x="13" y="11.5" width="8.5" height="7.5" fill="#f4f4f4" stroke="#222" stroke-width="1.5"/></svg>
<svg style="position:absolute;left:683px;top:1046.5px" width="22" height="11" viewBox="0 0 22 20" preserveAspectRatio="none"><path d="M2 11 Q4 15 7 17 Q13 9 20.5 3" fill="none" stroke="#3a2a70" stroke-width="4.6" stroke-linecap="round" stroke-linejoin="round"/><path d="M2 11 Q4 15 7 17 Q13 9 20.5 3" fill="none" stroke="#b8a0f4" stroke-width="2.6" stroke-linecap="round" stroke-linejoin="round"/></svg>
<svg style="position:absolute;left:724px;top:1046.5px" width="19" height="11" viewBox="0 0 22 20" preserveAspectRatio="none"><path d="M3.5 4 L15.5 16 M15.5 4 L3.5 16" stroke="#a4a4a4" stroke-width="5.2" stroke-linecap="round"/></svg>
<svg style="position:absolute;left:762px;top:1046.5px" width="22" height="11" viewBox="0 0 22 20" preserveAspectRatio="none"><rect x="0.6" y="7.5" width="6" height="11" fill="#f08a40" stroke="#2a2a2a" stroke-width="1"/><rect x="6.6" y="2.5" width="6" height="16" fill="#8ad060" stroke="#1a5a1a" stroke-width="1"/><rect x="12.6" y="0.6" width="5.5" height="17.9" fill="#60a8f0" stroke="#1a3a6a" stroke-width="1"/><rect x="18.1" y="6.5" width="3.4" height="12" fill="#f0f070" stroke="#2a2a2a" stroke-width="1"/></svg>
<svg style="position:absolute;left:145px;top:1048px" width="4" height="10" viewBox="0 0 4 10" preserveAspectRatio="none"><rect x="0" y="0" width="4" height="10" fill="#555"/></svg>
<div style="position:absolute;left:145px;top:1063px;width:641px;height:13px;background:#f3f3f3;"></div>
<div style="position:absolute;left:145px;top:1064px;width:382px;height:11.5px;background:#fdfdfd;"></div>
<div style="position:absolute;left:529px;top:1064px;width:257px;height:11.5px;background:#fdfdfd;"></div>
<div style="position:absolute;left:527px;top:1064px;width:1.5px;height:11.5px;background:#d0d0d0;"></div>
<div style="position:absolute;left:145px;top:1075.5px;width:641px;height:1.5px;background:#c8c8c8;"></div>
<div style="position:absolute;left:145px;top:1062.36px;font-family:'Liberation Mono',monospace;font-size:14px;line-height:14px;height:14px;color:#777;font-weight:bold;white-space:pre;transform:scale(1.0,0.56);transform-origin:0px 10.64px;">ls)</div>
<svg style="position:absolute;left:510px;top:1070px" width="10" height="4" viewBox="0 0 10 4" preserveAspectRatio="none"><path d="M1 1 L5 3 L9 1" fill="none" stroke="#777" stroke-width="1.5"/></svg>
<div style="position:absolute;left:145px;top:1077px;width:641px;height:16px;background:#f0f0f0;"></div>
<div style="position:absolute;left:145px;top:1078px;width:3px;height:15px;background:#f8f8f8;"></div>
<div style="position:absolute;left:148px;top:1078px;width:15px;height:15px;background:#ededed;"></div>
<div style="position:absolute;left:173px;top:1078px;width:108.5px;height:15px;background:#fafafa;"></div>
<div style="position:absolute;left:181.47px;top:1075.25px;font-family:'Liberation Sans',sans-serif;font-size:15px;line-height:15px;height:15px;color:#444;font-weight:normal;white-space:pre;transform:scale(1.0514,0.5040000000000001);transform-origin:0px 12.75px;">uuuuuuu.cpp</div>
<div style="position:absolute;left:145px;top:1093px;width:641px;height:417.5px;background:#ffffff;"></div>
<div style="position:absolute;left:163px;top:1093px;width:9px;height:417.5px;background:#ececec;"></div>
<div style="position:absolute;left:172px;top:1093px;width:3px;height:417.5px;background:#f6f6f6;"></div>
<div style="position:absolute;left:175px;top:1093px;width:53px;height:417.5px;background:#f0f0f0;"></div>
<div style="position:absolute;left:231px;top:1093px;width:555px;height:9.5px;background:#ccffff;"></div>
<div style="position:absolute;left:212px;top:1120.4px;width:1.5px;height:360.5999999999999px;background:#333;"></div>
<div style="position:absolute;left:212px;top:1480px;width:9px;height:1.5px;background:#333;"></div>
<div style="position:absolute;left:213px;top:1243.3px;width:6px;height:1.0px;background:#555;"></div>
<div style="position:absolute;left:213px;top:1307.0px;width:6px;height:1.0px;background:#555;"></div>
<div style="position:absolute;left:213px;top:1398.0px;width:6px;height:1.0px;background:#aaa;"></div>
<div style="position:absolute;left:213px;top:1461.7px;width:6px;height:1.0px;background:#aaa;"></div>
<div style="position:absolute;left:204px;top:1111.90px;width:16px;height:8.8px;box-sizing:border-box;border:1.4px solid #333;background:#fff"></div>
<div style="position:absolute;left:207px;top:1115.9px;width:10px;height:1.0px;background:#777;"></div>
<div style="position:absolute;left:204px;top:1193.80px;width:16px;height:8.8px;box-sizing:border-box;border:1.4px solid #333;background:#fff"></div>
<div style="position:absolute;left:207px;top:1197.8px;width:10px;height:1.0px;background:#777;"></div>
<div style="position:absolute;left:204px;top:1257.50px;width:16px;height:8.8px;box-sizing:border-box;border:1.4px solid #333;background:#fff"></div>
<div style="position:absolute;left:207px;top:1261.5px;width:10px;height:1.0px;background:#777;"></div>
<div style="position:absolute;left:204px;top:1348.50px;width:16px;height:8.8px;box-sizing:border-box;border:1.4px solid #333;background:#fff"></div>
<div style="position:absolute;left:207px;top:1352.5px;width:10px;height:1.0px;background:#777;"></div>
<div style="position:absolute;left:204px;top:1412.20px;width:16px;height:8.8px;box-sizing:border-box;border:1.4px solid #333;background:#fff"></div>
<div style="position:absolute;left:207px;top:1416.2px;width:10px;height:1.0px;background:#777;"></div>
<div style="position:absolute;left:264.5px;top:1202.40px;width:0;height:36.30px;border-left:1px dotted #bbb"></div>
<div style="position:absolute;left:264.5px;top:1266.10px;width:0;height:36.30px;border-left:1px dotted #bbb"></div>
<div style="position:absolute;left:264.5px;top:1357.10px;width:0;height:36.30px;border-left:1px dotted #bbb"></div>
<div style="position:absolute;left:264.5px;top:1420.80px;width:0;height:36.30px;border-left:1px dotted #bbb"></div>
<div style="position:absolute;left:190.9px;top:1090.33px;font-family:'Liberation Mono',monospace;font-size:14.3px;line-height:14.3px;height:14.3px;color:#333;font-weight:bold;white-space:pre;transform:scale(1.0,0.5);transform-origin:0px 10.87px;">1</div>
<div style="position:absolute;left:190.9px;top:1099.43px;font-family:'Liberation Mono',monospace;font-size:14.3px;line-height:14.3px;height:14.3px;color:#333;font-weight:bold;white-space:pre;transform:scale(1.0,0.5);transform-origin:0px 10.87px;">2</div>
<div style="position:absolute;left:190.9px;top:1108.53px;font-family:'Liberation Mono',monospace;font-size:14.3px;line-height:14.3px;height:14.3px;color:#333;font-weight:bold;white-space:pre;transform:scale(1.0,0.5);transform-origin:0px 10.87px;">3</div>
<div style="position:absolute;left:190.9px;top:1117.63px;font-family:'Liberation Mono',monospace;font-size:14.3px;line-height:14.3px;height:14.3px;color:#333;font-weight:bold;white-space:pre;transform:scale(1.0,0.5);transform-origin:0px 10.87px;">4</div>
<div style="position:absolute;left:190.9px;top:1126.73px;font-family:'Liberation Mono',monospace;font-size:14.3px;line-height:14.3px;height:14.3px;color:#333;font-weight:bold;white-space:pre;transform:scale(1.0,0.5);transform-origin:0px 10.87px;">5</div>
<div style="position:absolute;left:190.9px;top:1135.83px;font-family:'Liberation Mono',monospace;font-size:14.3px;line-height:14.3px;height:14.3px;color:#333;font-weight:bold;white-space:pre;transform:scale(1.0,0.5);transform-origin:0px 10.87px;">6</div>
<div style="position:absolute;left:190.9px;top:1144.93px;font-family:'Liberation Mono',monospace;font-size:14.3px;line-height:14.3px;height:14.3px;color:#333;font-weight:bold;white-space:pre;transform:scale(1.0,0.5);transform-origin:0px 10.87px;">7</div>
<div style="position:absolute;left:190.9px;top:1154.03px;font-family:'Liberation Mono',monospace;font-size:14.3px;line-height:14.3px;height:14.3px;color:#333;font-weight:bold;white-space:pre;transform:scale(1.0,0.5);transform-origin:0px 10.87px;">8</div>
<div style="position:absolute;left:190.9px;top:1163.13px;font-family:'Liberation Mono',monospace;font-size:14.3px;line-height:14.3px;height:14.3px;color:#333;font-weight:bold;white-space:pre;transform:scale(1.0,0.5);transform-origin:0px 10.87px;">9</div>
<div style="position:absolute;left:182.3px;top:1172.23px;font-family:'Liberation Mono',monospace;font-size:14.3px;line-height:14.3px;height:14.3px;color:#333;font-weight:bold;white-space:pre;transform:scale(1.0,0.5);transform-origin:0px 10.87px;">10</div>
<div style="position:absolute;left:182.3px;top:1181.33px;font-family:'Liberation Mono',monospace;font-size:14.3px;line-height:14.3px;height:14.3px;color:#333;font-weight:bold;white-space:pre;transform:scale(1.0,0.5);transform-origin:0px 10.87px;">11</div>
<div style="position:absolute;left:182.3px;top:1190.43px;font-family:'Liberation Mono',monospace;font-size:14.3px;line-height:14.3px;height:14.3px;color:#333;font-weight:bold;white-space:pre;transform:scale(1.0,0.5);transform-origin:0px 10.87px;">12</div>
<div style="position:absolute;left:182.3px;top:1199.53px;font-family:'Liberation Mono',monospace;font-size:14.3px;line-height:14.3px;height:14.3px;color:#333;font-weight:bold;white-space:pre;transform:scale(1.0,0.5);transform-origin:0px 10.87px;">13</div>
<div style="position:absolute;left:182.3px;top:1208.63px;font-family:'Liberation Mono',monospace;font-size:14.3px;line-height:14.3px;height:14.3px;color:#333;font-weight:bold;white-space:pre;transform:scale(1.0,0.5);transform-origin:0px 10.87px;">14</div>
<div style="position:absolute;left:182.3px;top:1217.73px;font-family:'Liberation Mono',monospace;font-size:14.3px;line-height:14.3px;height:14.3px;color:#333;font-weight:bold;white-space:pre;transform:scale(1.0,0.5);transform-origin:0px 10.87px;">15</div>
<div style="position:absolute;left:182.3px;top:1226.83px;font-family:'Liberation Mono',monospace;font-size:14.3px;line-height:14.3px;height:14.3px;color:#333;font-weight:bold;white-space:pre;transform:scale(1.0,0.5);transform-origin:0px 10.87px;">16</div>
<div style="position:absolute;left:182.3px;top:1235.93px;font-family:'Liberation Mono',monospace;font-size:14.3px;line-height:14.3px;height:14.3px;color:#333;font-weight:bold;white-space:pre;transform:scale(1.0,0.5);transform-origin:0px 10.87px;">17</div>
<div style="position:absolute;left:182.3px;top:1245.03px;font-family:'Liberation Mono',monospace;font-size:14.3px;line-height:14.3px;height:14.3px;color:#333;font-weight:bold;white-space:pre;transform:scale(1.0,0.5);transform-origin:0px 10.87px;">18</div>
<div style="position:absolute;left:182.3px;top:1254.13px;font-family:'Liberation Mono',monospace;font-size:14.3px;line-height:14.3px;height:14.3px;color:#333;font-weight:bold;white-space:pre;transform:scale(1.0,0.5);transform-origin:0px 10.87px;">19</div>
<div style="position:absolute;left:182.3px;top:1263.23px;font-family:'Liberation Mono',monospace;font-size:14.3px;line-height:14.3px;height:14.3px;color:#333;font-weight:bold;white-space:pre;transform:scale(1.0,0.5);transform-origin:0px 10.87px;">20</div>
<div style="position:absolute;left:182.3px;top:1272.33px;font-family:'Liberation Mono',monospace;font-size:14.3px;line-height:14.3px;height:14.3px;color:#333;font-weight:bold;white-space:pre;transform:scale(1.0,0.5);transform-origin:0px 10.87px;">21</div>
<div style="position:absolute;left:182.3px;top:1281.43px;font-family:'Liberation Mono',monospace;font-size:14.3px;line-height:14.3px;height:14.3px;color:#333;font-weight:bold;white-space:pre;transform:scale(1.0,0.5);transform-origin:0px 10.87px;">22</div>
<div style="position:absolute;left:182.3px;top:1290.53px;font-family:'Liberation Mono',monospace;font-size:14.3px;line-height:14.3px;height:14.3px;color:#333;font-weight:bold;white-space:pre;transform:scale(1.0,0.5);transform-origin:0px 10.87px;">23</div>
<div style="position:absolute;left:182.3px;top:1299.63px;font-family:'Liberation Mono',monospace;font-size:14.3px;line-height:14.3px;height:14.3px;color:#333;font-weight:bold;white-space:pre;transform:scale(1.0,0.5);transform-origin:0px 10.87px;">24</div>
<div style="position:absolute;left:182.3px;top:1308.73px;font-family:'Liberation Mono',monospace;font-size:14.3px;line-height:14.3px;height:14.3px;color:#333;font-weight:bold;white-space:pre;transform:scale(1.0,0.5);transform-origin:0px 10.87px;">25</div>
<div style="position:absolute;left:182.3px;top:1317.83px;font-family:'Liberation Mono',monospace;font-size:14.3px;line-height:14.3px;height:14.3px;color:#333;font-weight:bold;white-space:pre;transform:scale(1.0,0.5);transform-origin:0px 10.87px;">26</div>
<div style="position:absolute;left:182.3px;top:1326.93px;font-family:'Liberation Mono',monospace;font-size:14.3px;line-height:14.3px;height:14.3px;color:#333;font-weight:bold;white-space:pre;transform:scale(1.0,0.5);transform-origin:0px 10.87px;">27</div>
<div style="position:absolute;left:182.3px;top:1336.03px;font-family:'Liberation Mono',monospace;font-size:14.3px;line-height:14.3px;height:14.3px;color:#333;font-weight:bold;white-space:pre;transform:scale(1.0,0.5);transform-origin:0px 10.87px;">28</div>
<div style="position:absolute;left:182.3px;top:1345.13px;font-family:'Liberation Mono',monospace;font-size:14.3px;line-height:14.3px;height:14.3px;color:#333;font-weight:bold;white-space:pre;transform:scale(1.0,0.5);transform-origin:0px 10.87px;">29</div>
<div style="position:absolute;left:182.3px;top:1354.23px;font-family:'Liberation Mono',monospace;font-size:14.3px;line-height:14.3px;height:14.3px;color:#333;font-weight:bold;white-space:pre;transform:scale(1.0,0.5);transform-origin:0px 10.87px;">30</div>
<div style="position:absolute;left:182.3px;top:1363.33px;font-family:'Liberation Mono',monospace;font-size:14.3px;line-height:14.3px;height:14.3px;color:#333;font-weight:bold;white-space:pre;transform:scale(1.0,0.5);transform-origin:0px 10.87px;">31</div>
<div style="position:absolute;left:182.3px;top:1372.43px;font-family:'Liberation Mono',monospace;font-size:14.3px;line-height:14.3px;height:14.3px;color:#333;font-weight:bold;white-space:pre;transform:scale(1.0,0.5);transform-origin:0px 10.87px;">32</div>
<div style="position:absolute;left:182.3px;top:1381.53px;font-family:'Liberation Mono',monospace;font-size:14.3px;line-height:14.3px;height:14.3px;color:#333;font-weight:bold;white-space:pre;transform:scale(1.0,0.5);transform-origin:0px 10.87px;">33</div>
<div style="position:absolute;left:182.3px;top:1390.63px;font-family:'Liberation Mono',monospace;font-size:14.3px;line-height:14.3px;height:14.3px;color:#333;font-weight:bold;white-space:pre;transform:scale(1.0,0.5);transform-origin:0px 10.87px;">34</div>
<div style="position:absolute;left:182.3px;top:1399.73px;font-family:'Liberation Mono',monospace;font-size:14.3px;line-height:14.3px;height:14.3px;color:#333;font-weight:bold;white-space:pre;transform:scale(1.0,0.5);transform-origin:0px 10.87px;">35</div>
<div style="position:absolute;left:182.3px;top:1408.83px;font-family:'Liberation Mono',monospace;font-size:14.3px;line-height:14.3px;height:14.3px;color:#333;font-weight:bold;white-space:pre;transform:scale(1.0,0.5);transform-origin:0px 10.87px;">36</div>
<div style="position:absolute;left:182.3px;top:1417.93px;font-family:'Liberation Mono',monospace;font-size:14.3px;line-height:14.3px;height:14.3px;color:#333;font-weight:bold;white-space:pre;transform:scale(1.0,0.5);transform-origin:0px 10.87px;">37</div>
<div style="position:absolute;left:182.3px;top:1427.03px;font-family:'Liberation Mono',monospace;font-size:14.3px;line-height:14.3px;height:14.3px;color:#333;font-weight:bold;white-space:pre;transform:scale(1.0,0.5);transform-origin:0px 10.87px;">38</div>
<div style="position:absolute;left:182.3px;top:1436.13px;font-family:'Liberation Mono',monospace;font-size:14.3px;line-height:14.3px;height:14.3px;color:#333;font-weight:bold;white-space:pre;transform:scale(1.0,0.5);transform-origin:0px 10.87px;">39</div>
<div style="position:absolute;left:182.3px;top:1445.23px;font-family:'Liberation Mono',monospace;font-size:14.3px;line-height:14.3px;height:14.3px;color:#333;font-weight:bold;white-space:pre;transform:scale(1.0,0.5);transform-origin:0px 10.87px;">40</div>
<div style="position:absolute;left:182.3px;top:1454.33px;font-family:'Liberation Mono',monospace;font-size:14.3px;line-height:14.3px;height:14.3px;color:#333;font-weight:bold;white-space:pre;transform:scale(1.0,0.5);transform-origin:0px 10.87px;">41</div>
<div style="position:absolute;left:182.3px;top:1463.43px;font-family:'Liberation Mono',monospace;font-size:14.3px;line-height:14.3px;height:14.3px;color:#333;font-weight:bold;white-space:pre;transform:scale(1.0,0.5);transform-origin:0px 10.87px;">42</div>
<div style="position:absolute;left:182.3px;top:1472.53px;font-family:'Liberation Mono',monospace;font-size:14.3px;line-height:14.3px;height:14.3px;color:#333;font-weight:bold;white-space:pre;transform:scale(1.0,0.5);transform-origin:0px 10.87px;">43</div>
<div class="c2" style="position:absolute;left:232px;top:1089.91px;font-family:'Liberation Mono',monospace;font-size:14.85px;line-height:14.85px;height:14.85px;color:#000;font-weight:bold;white-space:pre;transform:scale(1.0,0.5);transform-origin:0px 11.29px;opacity:0.7;"><span class="pp">#include &lt;stdio.h&gt;</span></div>
<div class="c2" style="position:absolute;left:232px;top:1099.01px;font-family:'Liberation Mono',monospace;font-size:14.85px;line-height:14.85px;height:14.85px;color:#000;font-weight:bold;white-space:pre;transform:scale(1.0,0.5);transform-origin:0px 11.29px;opacity:0.75;"><span class="k">int</span> <span class="id">main</span><span class="sy">(</span><span class="k">void</span><span class="sy">)</span></div>
<div class="c2" style="position:absolute;left:232px;top:1108.11px;font-family:'Liberation Mono',monospace;font-size:14.85px;line-height:14.85px;height:14.85px;color:#000;font-weight:bold;white-space:pre;transform:scale(1.0,0.5);transform-origin:0px 11.29px;"><span class="sy">{</span></div>
<div class="c2" style="position:absolute;left:232px;top:1117.21px;font-family:'Liberation Mono',monospace;font-size:14.85px;line-height:14.85px;height:14.85px;color:#000;font-weight:bold;white-space:pre;transform:scale(1.0,0.5);transform-origin:0px 11.29px;">    <span class="k">char</span> <span class="id">employee</span> <span class="id">status</span><span class="sy">;</span></div>
<div class="c2" style="position:absolute;left:232px;top:1126.31px;font-family:'Liberation Mono',monospace;font-size:14.85px;line-height:14.85px;height:14.85px;color:#000;font-weight:bold;white-space:pre;transform:scale(1.0,0.5);transform-origin:0px 11.29px;opacity:0.7;">    <span class="k">int</span> <span class="id">year</span> <span class="id">of_service</span><span class="sy">;</span></div>
<div class="c2" style="position:absolute;left:232px;top:1135.41px;font-family:'Liberation Mono',monospace;font-size:14.85px;line-height:14.85px;height:14.85px;color:#000;font-weight:bold;white-space:pre;transform:scale(1.0,0.5);transform-origin:0px 11.29px;opacity:0.7;">    <span class="k">int</span> <span class="id">salary</span><span class="sy">;</span></div>
<div class="c2" style="position:absolute;left:232px;top:1144.51px;font-family:'Liberation Mono',monospace;font-size:14.85px;line-height:14.85px;height:14.85px;color:#000;font-weight:bold;white-space:pre;transform:scale(1.0,0.5);transform-origin:0px 11.29px;">    <span class="k">int</span> <span class="id">new</span> <span class="id">salary</span><span class="sy">;</span></div>
<div class="c2" style="position:absolute;left:232px;top:1153.61px;font-family:'Liberation Mono',monospace;font-size:14.85px;line-height:14.85px;height:14.85px;color:#000;font-weight:bold;white-space:pre;transform:scale(1.0,0.5);transform-origin:0px 11.29px;opacity:0.75;"></div>
<div class="c2" style="position:absolute;left:232px;top:1162.71px;font-family:'Liberation Mono',monospace;font-size:14.85px;line-height:14.85px;height:14.85px;color:#000;font-weight:bold;white-space:pre;transform:scale(1.0,0.5);transform-origin:0px 11.29px;opacity:0.7;">    <span class="id">printf</span><span class="sy">(</span><span class="s">&quot;please enter your employee_status:\n&quot;</span><span class="sy">)</span><span class="sy">;</span></div>
<div class="c2" style="position:absolute;left:232px;top:1171.81px;font-family:'Liberation Mono',monospace;font-size:14.85px;line-height:14.85px;height:14.85px;color:#000;font-weight:bold;white-space:pre;transform:scale(1.0,0.5);transform-origin:0px 11.29px;opacity:0.7;">    <span class="id">scanf</span><span class="sy">(</span><span class="s">&quot;%c&quot;</span><span class="sy">,</span><span class="sy">&amp;</span><span class="id">employee_status</span><span class="sy">:</span><span class="sy">\</span><span class="id">n</span><span class="s">&quot;);</span></div>
<div class="c2" style="position:absolute;left:232px;top:1180.91px;font-family:'Liberation Mono',monospace;font-size:14.85px;line-height:14.85px;height:14.85px;color:#000;font-weight:bold;white-space:pre;transform:scale(1.0,0.5);transform-origin:0px 11.29px;">    <span class="k">switch</span><span class="sy">(</span><span class="id">employee_status</span><span class="sy">)</span><span class="sy">;</span></div>
<div class="c2" style="position:absolute;left:232px;top:1190.01px;font-family:'Liberation Mono',monospace;font-size:14.85px;line-height:14.85px;height:14.85px;color:#000;font-weight:bold;white-space:pre;transform:scale(1.0,0.5);transform-origin:0px 11.29px;">    <span class="sy">{</span></div>
<div class="c2" style="position:absolute;left:232px;top:1199.11px;font-family:'Liberation Mono',monospace;font-size:14.85px;line-height:14.85px;height:14.85px;color:#000;font-weight:bold;white-space:pre;transform:scale(1.0,0.5);transform-origin:0px 11.29px;opacity:0.75;">        <span class="k">case</span><span class="ch">&#x27;f&#x27;</span><span class="sy">:</span><span class="id">printf</span><span class="sy">(</span><span class="s">&quot;please enter your salary:\n&quot;</span><span class="sy">)</span></div>
<div class="c2" style="position:absolute;left:232px;top:1208.21px;font-family:'Liberation Mono',monospace;font-size:14.85px;line-height:14.85px;height:14.85px;color:#000;font-weight:bold;white-space:pre;transform:scale(1.0,0.5);transform-origin:0px 11.29px;">        <span class="id">scanf</span><span class="sy">(</span><span class="s">&quot;%c&quot;</span><span class="sy">,</span><span class="sy">&amp;</span><span class="id">employee_status</span><span class="sy">)</span><span class="sy">;</span></div>
<div class="c2" style="position:absolute;left:232px;top:1217.31px;font-family:'Liberation Mono',monospace;font-size:14.85px;line-height:14.85px;height:14.85px;color:#000;font-weight:bold;white-space:pre;transform:scale(1.0,0.5);transform-origin:0px 11.29px;opacity:0.8;">        <span class="id">new</span> <span class="id">calary</span><span class="sy">=</span><span class="n">1.05</span><span class="sy">*</span><span class="id">salary</span><span class="sy">;</span></div>
<div class="c2" style="position:absolute;left:232px;top:1226.41px;font-family:'Liberation Mono',monospace;font-size:14.85px;line-height:14.85px;height:14.85px;color:#000;font-weight:bold;white-space:pre;transform:scale(1.0,0.5);transform-origin:0px 11.29px;opacity:0.7;">        <span class="id">printf</span><span class="sy">(</span><span class="s">&quot;Your new salary is %d&quot;</span><span class="sy">,</span><span class="id">new</span><span class="sy">-</span><span class="id">salary</span><span class="sy">)</span><span class="sy">;</span></div>
<div class="c2" style="position:absolute;left:232px;top:1235.51px;font-family:'Liberation Mono',monospace;font-size:14.85px;line-height:14.85px;height:14.85px;color:#000;font-weight:bold;white-space:pre;transform:scale(1.0,0.5);transform-origin:0px 11.29px;">    <span class="sy">}</span></div>
<div class="c2" style="position:absolute;left:232px;top:1244.61px;font-family:'Liberation Mono',monospace;font-size:14.85px;line-height:14.85px;height:14.85px;color:#000;font-weight:bold;white-space:pre;transform:scale(1.0,0.5);transform-origin:0px 11.29px;"><span class="k">else</span></div>
<div class="c2" style="position:absolute;left:232px;top:1253.71px;font-family:'Liberation Mono',monospace;font-size:14.85px;line-height:14.85px;height:14.85px;color:#000;font-weight:bold;white-space:pre;transform:scale(1.0,0.5);transform-origin:0px 11.29px;">    <span class="sy">{</span></div>
<div class="c2" style="position:absolute;left:232px;top:1262.81px;font-family:'Liberation Mono',monospace;font-size:14.85px;line-height:14.85px;height:14.85px;color:#000;font-weight:bold;white-space:pre;transform:scale(1.0,0.5);transform-origin:0px 11.29px;opacity:0.75;">        <span class="k">case</span><span class="ch">&#x27;f&#x27;</span><span class="sy">:</span><span class="id">printf</span><span class="sy">(</span><span class="s">&quot;please enter your salary:\n&quot;</span><span class="sy">)</span></div>
<div class="c2" style="position:absolute;left:232px;top:1271.91px;font-family:'Liberation Mono',monospace;font-size:14.85px;line-height:14.85px;height:14.85px;color:#000;font-weight:bold;white-space:pre;transform:scale(1.0,0.5);transform-origin:0px 11.29px;opacity:0.75;">        <span class="id">scanf</span><span class="sy">(</span><span class="s">&quot;%c&quot;</span><span class="sy">,</span><span class="sy">&amp;</span><span class="id">employee_status</span><span class="sy">)</span><span class="sy">;</span></div>
<div class="c2" style="position:absolute;left:232px;top:1281.01px;font-family:'Liberation Mono',monospace;font-size:14.85px;line-height:14.85px;height:14.85px;color:#000;font-weight:bold;white-space:pre;transform:scale(1.0,0.5);transform-origin:0px 11.29px;">        <span class="id">new_salary</span><span class="sy">=</span><span class="n">1.04</span><span class="sy">*</span><span class="id">salary</span><span class="sy">;</span></div>
<div class="c2" style="position:absolute;left:232px;top:1290.11px;font-family:'Liberation Mono',monospace;font-size:14.85px;line-height:14.85px;height:14.85px;color:#000;font-weight:bold;white-space:pre;transform:scale(1.0,0.5);transform-origin:0px 11.29px;opacity:0.9;">        <span class="id">printf</span><span class="sy">(</span><span class="s">&quot;Your new salary is %d&quot;</span><span class="sy">,</span><span class="id">new</span><span class="sy">-</span><span class="id">salary</span><span class="sy">)</span><span class="sy">;</span></div>
<div class="c2" style="position:absolute;left:232px;top:1299.21px;font-family:'Liberation Mono',monospace;font-size:14.85px;line-height:14.85px;height:14.85px;color:#000;font-weight:bold;white-space:pre;transform:scale(1.0,0.5);transform-origin:0px 11.29px;">    <span class="sy">}</span><span class="k">break</span><span class="sy">;</span></div>
<div class="c2" style="position:absolute;left:232px;top:1308.31px;font-family:'Liberation Mono',monospace;font-size:14.85px;line-height:14.85px;height:14.85px;color:#000;font-weight:bold;white-space:pre;transform:scale(1.0,0.5);transform-origin:0px 11.29px;"></div>
<div class="c2" style="position:absolute;left:232px;top:1317.41px;font-family:'Liberation Mono',monospace;font-size:14.85px;line-height:14.85px;height:14.85px;color:#000;font-weight:bold;white-space:pre;transform:scale(1.0,0.5);transform-origin:0px 11.29px;">    <span class="k">case</span><span class="ch">&#x27;P&#x27;</span><span class="sy">:</span><span class="id">printf</span><span class="sy">(</span><span class="s">&quot;please enter your year_of _ service:\n&quot;</span><span class="sy">)</span></div>
<div class="c2" style="position:absolute;left:232px;top:1326.51px;font-family:'Liberation Mono',monospace;font-size:14.85px;line-height:14.85px;height:14.85px;color:#000;font-weight:bold;white-space:pre;transform:scale(1.0,0.5);transform-origin:0px 11.29px;opacity:0.9;">    <span class="id">scanf</span><span class="sy">(</span><span class="s">&quot;%d&quot;</span><span class="sy">,</span><span class="sy">&amp;</span><span class="id">years</span> <span class="id">of</span> <span class="id">service</span><span class="sy">)</span><span class="sy">;</span></div>
<div class="c2" style="position:absolute;left:232px;top:1335.61px;font-family:'Liberation Mono',monospace;font-size:14.85px;line-height:14.85px;height:14.85px;color:#000;font-weight:bold;white-space:pre;transform:scale(1.0,0.5);transform-origin:0px 11.29px;opacity:0.7;">    <span class="k">if</span><span class="sy">(</span><span class="id">year_of_service</span><span class="sy">&gt;</span><span class="n">5</span><span class="sy">)</span></div>
<div class="c2" style="position:absolute;left:232px;top:1344.71px;font-family:'Liberation Mono',monospace;font-size:14.85px;line-height:14.85px;height:14.85px;color:#000;font-weight:bold;white-space:pre;transform:scale(1.0,0.5);transform-origin:0px 11.29px;">    <span class="sy">{</span></div>
<div class="c2" style="position:absolute;left:232px;top:1353.81px;font-family:'Liberation Mono',monospace;font-size:14.85px;line-height:14.85px;height:14.85px;color:#000;font-weight:bold;white-space:pre;transform:scale(1.0,0.5);transform-origin:0px 11.29px;">        <span class="k">case</span><span class="ch">&#x27;p&#x27;</span><span class="sy">:</span><span class="id">printf</span><span class="sy">(</span><span class="s">&quot;please enter your salary:\n&quot;</span><span class="sy">)</span></div>
<div class="c2" style="position:absolute;left:232px;top:1362.91px;font-family:'Liberation Mono',monospace;font-size:14.85px;line-height:14.85px;height:14.85px;color:#000;font-weight:bold;white-space:pre;transform:scale(1.0,0.5);transform-origin:0px 11.29px;opacity:0.7;">        <span class="id">scanf</span><span class="sy">(</span><span class="s">&quot;%d&quot;</span><span class="sy">,</span><span class="sy">&amp;</span><span class="id">employee_status</span><span class="sy">)</span><span class="sy">;</span></div>
<div class="c2" style="position:absolute;left:232px;top:1372.01px;font-family:'Liberation Mono',monospace;font-size:14.85px;line-height:14.85px;height:14.85px;color:#000;font-weight:bold;white-space:pre;transform:scale(1.0,0.5);transform-origin:0px 11.29px;opacity:0.9;">        <span class="id">new_salary</span><span class="sy">=</span><span class="n">1.05</span><span class="sy">*</span><span class="id">salary</span><span class="sy">;</span></div>
<div class="c2" style="position:absolute;left:232px;top:1381.11px;font-family:'Liberation Mono',monospace;font-size:14.85px;line-height:14.85px;height:14.85px;color:#000;font-weight:bold;white-space:pre;transform:scale(1.0,0.5);transform-origin:0px 11.29px;">        <span class="id">printf</span><span class="sy">(</span><span class="s">&quot;Your new salary is %d&quot;</span><span class="sy">,</span><span class="id">new</span><span class="sy">-</span><span class="id">salary</span><span class="sy">)</span><span class="sy">;</span></div>
<div class="c2" style="position:absolute;left:232px;top:1390.21px;font-family:'Liberation Mono',monospace;font-size:14.85px;line-height:14.85px;height:14.85px;color:#000;font-weight:bold;white-space:pre;transform:scale(1.0,0.5);transform-origin:0px 11.29px;">    <span class="sy">}</span></div>
<div class="c2" style="position:absolute;left:232px;top:1399.31px;font-family:'Liberation Mono',monospace;font-size:14.85px;line-height:14.85px;height:14.85px;color:#000;font-weight:bold;white-space:pre;transform:scale(1.0,0.5);transform-origin:0px 11.29px;opacity:0.65;"><span class="k">else</span></div>
<div class="c2" style="position:absolute;left:232px;top:1408.41px;font-family:'Liberation Mono',monospace;font-size:14.85px;line-height:14.85px;height:14.85px;color:#000;font-weight:bold;white-space:pre;transform:scale(1.0,0.5);transform-origin:0px 11.29px;">    <span class="sy">{</span></div>
<div class="c2" style="position:absolute;left:232px;top:1417.51px;font-family:'Liberation Mono',monospace;font-size:14.85px;line-height:14.85px;height:14.85px;color:#000;font-weight:bold;white-space:pre;transform:scale(1.0,0.5);transform-origin:0px 11.29px;">        <span class="k">case</span><span class="ch">&#x27;p&#x27;</span><span class="sy">:</span><span class="id">printf</span><span class="sy">(</span><span class="s">&quot;please enter your salary:\n&quot;</span><span class="sy">)</span></div>
<div class="c2" style="position:absolute;left:232px;top:1426.61px;font-family:'Liberation Mono',monospace;font-size:14.85px;line-height:14.85px;height:14.85px;color:#000;font-weight:bold;white-space:pre;transform:scale(1.0,0.5);transform-origin:0px 11.29px;opacity:0.9;">        <span class="id">scanf</span><span class="sy">(</span><span class="s">&quot;%d&quot;</span><span class="sy">,</span><span class="sy">&amp;</span><span class="id">employee</span> <span class="id">status</span><span class="sy">)</span><span class="sy">;</span></div>
<div class="c2" style="position:absolute;left:232px;top:1435.71px;font-family:'Liberation Mono',monospace;font-size:14.85px;line-height:14.85px;height:14.85px;color:#000;font-weight:bold;white-space:pre;transform:scale(1.0,0.5);transform-origin:0px 11.29px;opacity:0.65;">        <span class="id">new_salary</span><span class="sy">=</span><span class="n">1.025</span><span class="sy">*</span><span class="id">salary</span><span class="sy">;</span></div>
<div class="c2" style="position:absolute;left:232px;top:1444.81px;font-family:'Liberation Mono',monospace;font-size:14.85px;line-height:14.85px;height:14.85px;color:#000;font-weight:bold;white-space:pre;transform:scale(1.0,0.5);transform-origin:0px 11.29px;opacity:0.9;">        <span class="id">printf</span><span class="sy">(</span><span class="s">&quot;Your new salary is %d&quot;</span><span class="sy">,</span><span class="id">new</span> <span class="id">salary</span><span class="sy">)</span><span class="sy">;</span></div>
<div class="c2" style="position:absolute;left:232px;top:1453.91px;font-family:'Liberation Mono',monospace;font-size:14.85px;line-height:14.85px;height:14.85px;color:#000;font-weight:bold;white-space:pre;transform:scale(1.0,0.5);transform-origin:0px 11.29px;">    <span class="sy">}</span></div>
<div class="c2" style="position:absolute;left:232px;top:1463.01px;font-family:'Liberation Mono',monospace;font-size:14.85px;line-height:14.85px;height:14.85px;color:#000;font-weight:bold;white-space:pre;transform:scale(1.0,0.5);transform-origin:0px 11.29px;opacity:0.8;">    <span class="k">return</span> <span class="n">0</span><span class="sy">;</span></div>
<div class="c2" style="position:absolute;left:232px;top:1472.11px;font-family:'Liberation Mono',monospace;font-size:14.85px;line-height:14.85px;height:14.85px;color:#000;font-weight:bold;white-space:pre;transform:scale(1.0,0.5);transform-origin:0px 11.29px;"><span class="sy">}</span></div>
<div style="position:absolute;left:145px;top:1510.5px;width:641px;height:15.5px;background:#f0f0f0;"></div>
<div style="position:absolute;left:145px;top:1510.5px;width:374px;height:15.0px;background:#f4f4f4;"></div>
<div style="position:absolute;left:180px;top:1512px;width:1px;height:13px;background:#d0d0d0;"></div>
<div style="position:absolute;left:309px;top:1512px;width:1px;height:13px;background:#d0d0d0;"></div>
<div style="position:absolute;left:397px;top:1512px;width:1px;height:13px;background:#d0d0d0;"></div>
<div style="position:absolute;left:518.5px;top:1512px;width:1.0px;height:13px;background:#d0d0d0;"></div>
<div style="position:absolute;left:144.45px;top:1509.95px;font-family:'Liberation Sans',sans-serif;font-size:15px;line-height:15px;height:15px;color:#444;font-weight:normal;white-space:pre;transform:scale(0.8185,0.5);transform-origin:0px 12.75px;">es m.</div>
<svg style="position:absolute;left:188px;top:1514.5px" width="22" height="9" viewBox="0 0 22 20" preserveAspectRatio="none"><rect x="0.6" y="7.5" width="6" height="11" fill="#f08a40" stroke="#2a2a2a" stroke-width="1"/><rect x="6.6" y="2.5" width="6" height="16" fill="#8ad060" stroke="#1a5a1a" stroke-width="1"/><rect x="12.6" y="0.6" width="5.5" height="17.9" fill="#60a8f0" stroke="#1a3a6a" stroke-width="1"/><rect x="18.1" y="6.5" width="3.4" height="12" fill="#f0f070" stroke="#2a2a2a" stroke-width="1"/></svg>
<div style="position:absolute;left:216.22px;top:1509.95px;font-family:'Liberation Sans',sans-serif;font-size:15px;line-height:15px;height:15px;color:#555;font-weight:normal;white-space:pre;transform:scale(1.0388,0.5);transform-origin:0px 12.75px;">Compile Log</div>
<svg style="position:absolute;left:318.7px;top:1515px" width="21" height="7" viewBox="0 0 22 20" preserveAspectRatio="none"><path d="M2 11 Q4 15 7 17 Q13 9 20.5 3" fill="none" stroke="#3a2a70" stroke-width="4.6" stroke-linecap="round" stroke-linejoin="round"/><path d="M2 11 Q4 15 7 17 Q13 9 20.5 3" fill="none" stroke="#b8a0f4" stroke-width="2.6" stroke-linecap="round" stroke-linejoin="round"/></svg>
<div style="position:absolute;left:345.44px;top:1509.95px;font-family:'Liberation Sans',sans-serif;font-size:15px;line-height:15px;height:15px;color:#555;font-weight:normal;white-space:pre;transform:scale(1.0476,0.5);transform-origin:0px 12.75px;">Debug</div>
<svg style="position:absolute;left:406.7px;top:1514.5px" width="20" height="9" viewBox="0 0 22 20" preserveAspectRatio="none"><rect x="0.8" y="1" width="15" height="18" fill="#e8e8e8" stroke="#222" stroke-width="1.6"/><circle cx="11" cy="9" r="5.5" fill="#9fe0e8" stroke="#333" stroke-width="1.5"/><path d="M15 13 L20.5 18.5" stroke="#b08020" stroke-width="3"/></svg>
<div style="position:absolute;left:434.27px;top:1509.95px;font-family:'Liberation Sans',sans-serif;font-size:15px;line-height:15px;height:15px;color:#555;font-weight:normal;white-space:pre;transform:scale(0.944,0.5);transform-origin:0px 12.75px;">Find Results</div>
<div style="position:absolute;left:145px;top:1526px;width:641px;height:16px;background:#f0f0f0;"></div>
<div style="position:absolute;left:572.5px;top:1527px;width:1.0px;height:14px;background:#d0d0d0;"></div>
<div style="position:absolute;left:674.5px;top:1527px;width:1.0px;height:14px;background:#d0d0d0;"></div>
<div style="position:absolute;left:191.63px;top:1526.05px;font-family:'Liberation Sans',sans-serif;font-size:15px;line-height:15px;height:15px;color:#2a2a2a;font-weight:bold;white-space:pre;transform:scale(0.8211,0.48);transform-origin:0px 12.75px;">Sel:</div>
<div style="position:absolute;left:232.33px;top:1526.05px;font-family:'Liberation Sans',sans-serif;font-size:15px;line-height:15px;height:15px;color:#2a2a2a;font-weight:bold;white-space:pre;transform:scale(1.1228,0.48);transform-origin:0px 12.75px;">0</div>
<div style="position:absolute;left:297.83px;top:1526.05px;font-family:'Liberation Sans',sans-serif;font-size:15px;line-height:15px;height:15px;color:#2a2a2a;font-weight:bold;white-space:pre;transform:scale(0.8945,0.48);transform-origin:0px 12.75px;">Lines:</div>
<div style="position:absolute;left:350.47px;top:1526.05px;font-family:'Liberation Sans',sans-serif;font-size:15px;line-height:15px;height:15px;color:#2a2a2a;font-weight:bold;white-space:pre;transform:scale(1.0063,0.48);transform-origin:0px 12.75px;">43</div>
<div style="position:absolute;left:423.68px;top:1526.05px;font-family:'Liberation Sans',sans-serif;font-size:15px;line-height:15px;height:15px;color:#2a2a2a;font-weight:bold;white-space:pre;transform:scale(0.9396,0.48);transform-origin:0px 12.75px;">Length:</div>
<div style="position:absolute;left:483.95px;top:1526.05px;font-family:'Liberation Sans',sans-serif;font-size:15px;line-height:15px;height:15px;color:#2a2a2a;font-weight:bold;white-space:pre;transform:scale(0.8711,0.48);transform-origin:0px 12.75px;">1050</div>
<div style="position:absolute;left:577.89px;top:1526.05px;font-family:'Liberation Sans',sans-serif;font-size:15px;line-height:15px;height:15px;color:#2a2a2a;font-weight:bold;white-space:pre;transform:scale(0.9326,0.48);transform-origin:0px 12.75px;">Insert</div>
<div style="position:absolute;left:679.68px;top:1526.05px;font-family:'Liberation Sans',sans-serif;font-size:15px;line-height:15px;height:15px;color:#2a2a2a;font-weight:bold;white-space:pre;transform:scale(0.9403,0.48);transform-origin:0px 12.75px;">Done parsing in</div>
<div style="position:absolute;left:0px;top:200px;width:104px;height:666px;background:#ffffff;"></div>
<div style="position:absolute;left:830px;top:200px;width:370px;height:666px;background:#ffffff;"></div>
<div style="position:absolute;left:0px;top:1015px;width:145px;height:530px;background:#ffffff;"></div>
<div style="position:absolute;left:786px;top:1015px;width:414px;height:530px;background:#ffffff;"></div>
</body></html>
